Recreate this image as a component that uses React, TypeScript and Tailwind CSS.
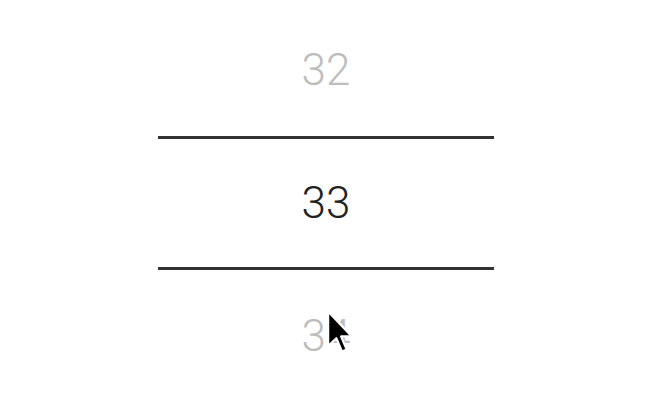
const font = { fontFamily: 'Roboto, "Liberation Sans", Arial, sans-serif' };

function Cursor() {
  return (
    <svg
      className="absolute left-[326px] top-[309px]"
      width="28"
      height="48"
      viewBox="0 0 13 22"
    >
      <path
        d="M1 1 L1 17 L4.8 13.4 L7.4 19.6 L9.6 18.7 L7 12.6 L12 12.6 Z"
        fill="#000"
        stroke="#fff"
        strokeWidth="1"
        strokeLinejoin="round"
      />
    </svg>
  );
}

export default function App() {
  const rows = [
    { value: 32, active: false },
    { value: 33, active: true },
    { value: 34, active: false },
  ];

  return (
    <div className="relative h-[400px] w-[650px] overflow-hidden bg-white" style={font}>
      <div className="ml-[158px] flex w-[336px] flex-col pt-[4px]">
        <div className="flex h-[132px] items-center justify-center text-[44px] font-light text-[#bdbdbd]">
          {rows[0].value}
        </div>
        <div className="h-[3px] bg-[#333333]" />
        <div className="flex h-[128px] items-center justify-center text-[44px] font-light text-[#222222]">
          {rows[1].value}
        </div>
        <div className="h-[3px] bg-[#333333]" />
        <div className="flex h-[132px] items-center justify-center text-[44px] font-light text-[#bdbdbd]">
          {rows[2].value}
        </div>
      </div>
      <Cursor />
    </div>
  );
}
